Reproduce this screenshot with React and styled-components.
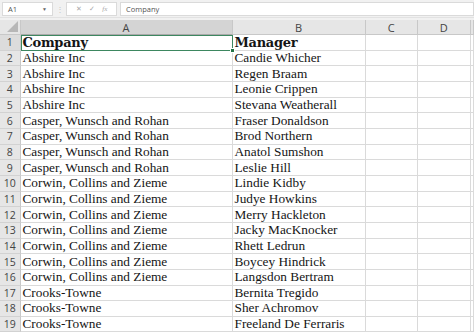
import React from "react";
import styled, { createGlobalStyle } from "styled-components";

const rows = [
  ["Company", "Manager"],
  ["Abshire Inc", "Candie Whicher"],
  ["Abshire Inc", "Regen Braam"],
  ["Abshire Inc", "Leonie Crippen"],
  ["Abshire Inc", "Stevana Weatherall"],
  ["Casper, Wunsch and Rohan", "Fraser Donaldson"],
  ["Casper, Wunsch and Rohan", "Brod Northern"],
  ["Casper, Wunsch and Rohan", "Anatol Sumshon"],
  ["Casper, Wunsch and Rohan", "Leslie Hill"],
  ["Corwin, Collins and Zieme", "Lindie Kidby"],
  ["Corwin, Collins and Zieme", "Judye Howkins"],
  ["Corwin, Collins and Zieme", "Merry Hackleton"],
  ["Corwin, Collins and Zieme", "Jacky MacKnocker"],
  ["Corwin, Collins and Zieme", "Rhett Ledrun"],
  ["Corwin, Collins and Zieme", "Boycey Hindrick"],
  ["Corwin, Collins and Zieme", "Langsdon Bertram"],
  ["Crooks-Towne", "Bernita Tregido"],
  ["Crooks-Towne", "Sher Achromov"],
  ["Crooks-Towne", "Freeland De Ferraris"],
];

const columns = ["A", "B", "C", "D", ""];

const GlobalStyle = createGlobalStyle`
  html, body {
    margin: 0;
    padding: 0;
    background: #ffffff;
    overflow: hidden;
  }
`;

const Page = styled.div`
  width: 474px;
  height: 334px;
  overflow: hidden;
  background: #ffffff;
  font-family: "Open Sans", "Noto Sans", sans-serif;
`;

const Toolbar = styled.div`
  height: 18px;
  display: flex;
  align-items: center;
  gap: 3px;
  padding: 0 0 0 2px;
  background: #f1f1f1;
  border-bottom: 1px solid #e2e2e2;
  box-sizing: border-box;
`;

const Box = styled.div`
  height: 14px;
  background: #ffffff;
  border: 1px solid #dadada;
  box-sizing: border-box;
  display: flex;
  align-items: center;
  font-size: 7.5px;
  color: #555;
  padding: 0 5px;
  width: ${(p) => p.$width || "auto"};
  flex: ${(p) => (p.$grow ? 1 : "none")};
  justify-content: ${(p) => p.$justify || "flex-start"};
`;

const Caret = styled.span`
  margin-left: auto;
  font-size: 5px;
  color: #666;
`;

const Dots = styled.span`
  width: 7px;
  text-align: center;
  color: #c4c4c4;
  font-size: 8px;
`;

const Tool = styled.span`
  color: #a8a8a8;
  font-size: 7px;
  font-style: ${(p) => (p.$italic ? "italic" : "normal")};
  font-family: ${(p) => (p.$italic ? '"Liberation Serif", serif' : "inherit")};
`;

const Spacer = styled.div`
  height: 2px;
  background: #f1f1f1;
`;

const Grid = styled.div`
  display: grid;
  grid-template-columns: 20.5px 212px 133px 52.5px 52.5px 1fr;
  grid-template-rows: 15px repeat(19, 15.66px);
`;

const Corner = styled.div`
  background: #e6e6e6;
  border-right: 1px solid #c8c8c8;
  border-bottom: 1px solid #c8c8c8;
  position: relative;
  overflow: hidden;
  &::after {
    content: "";
    position: absolute;
    right: 2px;
    bottom: 2px;
    border-style: solid;
    border-width: 0 0 11px 11px;
    border-color: transparent transparent #b7b7b7 transparent;
  }
`;

const ColHead = styled.div`
  background: ${(p) => (p.$active ? "#d4d4d4" : "#e6e6e6")};
  border-right: 1px solid #c8c8c8;
  border-bottom: 1px solid ${(p) => (p.$active ? "#a9a9a9" : "#c8c8c8")};
  box-sizing: border-box;
  display: flex;
  align-items: center;
  justify-content: center;
  font-size: 11px;
  color: #444;
`;

const RowHead = styled.div`
  background: ${(p) => (p.$active ? "#dcdcdc" : "#e6e6e6")};
  border-right: 1px solid #c8c8c8;
  border-bottom: 1px solid #d2d2d2;
  box-sizing: border-box;
  display: flex;
  align-items: center;
  justify-content: center;
  font-size: 10.5px;
  color: #444;
`;

const Cell = styled.div`
  border-right: 1px solid #dadada;
  border-bottom: 1px solid #dadada;
  box-sizing: border-box;
  display: flex;
  align-items: center;
  padding-left: 2px;
  font-family: ${(p) =>
    p.$bold ? '"DejaVu Serif", Georgia, serif' : '"Liberation Serif", Georgia, serif'};
  font-size: ${(p) => (p.$bold ? "13px" : "13.3px")};
  letter-spacing: ${(p) => (p.$bold ? "-0.3px" : "0")};
  color: #151515;
  font-weight: ${(p) => (p.$bold ? 700 : 400)};
  white-space: nowrap;
  overflow: hidden;
  position: relative;
`;

const ActiveCell = styled(Cell)`
  overflow: visible;
  border: 1px solid #3d8760;
  padding-left: 1px;
  &::after {
    content: "";
    position: absolute;
    right: -3px;
    bottom: -3px;
    width: 3px;
    height: 3px;
    background: #217346;
    border: 1px solid #ffffff;
    z-index: 2;
  }
`;

export default function App() {
  return (
    <Page>
      <GlobalStyle />
      <Toolbar>
        <Box $width="51px">
          A1
          <Caret>▼</Caret>
        </Box>
        <Dots>⋮</Dots>
        <Box $width="51px" $justify="space-around">
          <Tool>✕</Tool>
          <Tool>✓</Tool>
          <Tool $italic>fx</Tool>
        </Box>
        <Box $grow>Company</Box>
      </Toolbar>
      <Spacer />
      <Grid>
        <Corner />
        {columns.map((c, i) => (
          <ColHead key={i} $active={c === "A"}>
            {c}
          </ColHead>
        ))}
        {rows.map((r, i) => (
          <React.Fragment key={i}>
            <RowHead $active={i === 0}>{i + 1}</RowHead>
            {i === 0 ? (
              <ActiveCell $bold>{r[0]}</ActiveCell>
            ) : (
              <Cell>{r[0]}</Cell>
            )}
            <Cell $bold={i === 0}>{r[1]}</Cell>
            <Cell />
            <Cell />
            <Cell />
          </React.Fragment>
        ))}
      </Grid>
    </Page>
  );
}
